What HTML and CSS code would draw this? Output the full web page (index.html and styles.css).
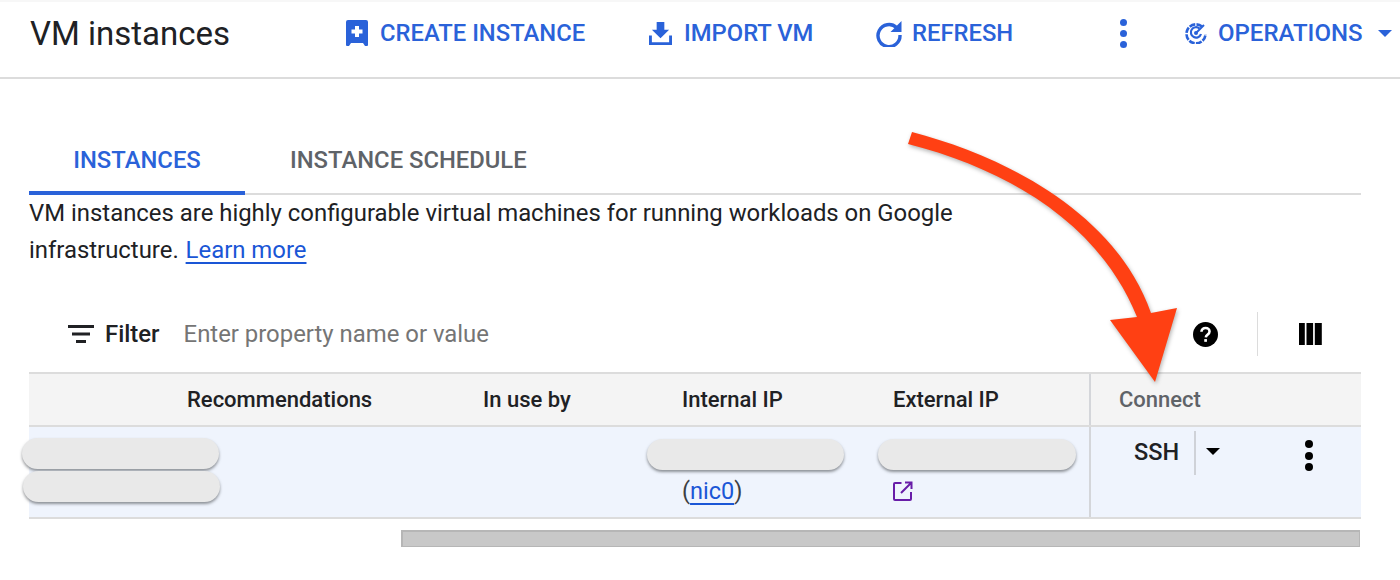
FILE: index.html
```html
<!DOCTYPE html>
<html lang="en">
<head>
<meta charset="utf-8">
<title>VM instances</title>
<link rel="stylesheet" href="styles.css">
</head>
<body>
<header class="topbar">
  <h1 class="title">VM instances</h1>
  <nav class="actions">
    <a class="action act-create">
      <svg class="ico ico-create" viewBox="0 0 22 26"><path fill="#2a62d9" d="M2 0h18a2 2 0 0 1 2 2v23a1 1 0 0 1-1 1h-2l-2-3H5l-2 3H1a1 1 0 0 1-1-1V2a2 2 0 0 1 2-2z"/><path fill="#fff" d="M9 6h4v3.500h3.500v4H13V17H9v-3.500H5.500v-4H9z"/></svg>
      CREATE INSTANCE</a>
    <a class="action act-import">
      <svg class="ico ico-import" viewBox="0 0 24 24"><path fill="#2a62d9" d="M8 0h8v8h5l-9 9-9-9h5z"/><path fill="#2a62d9" d="M0 14h3v7h18v-7h3v10H0z"/></svg>
      IMPORT VM</a>
    <a class="action act-refresh">
      <svg class="ico ico-refresh" viewBox="0 0 26 27"><path fill="none" stroke="#2a62d9" stroke-width="3.400" d="M20.500 7.500A11 11 0 1 0 24 15"/><path fill="#2a62d9" d="M25.500 1v11h-11z"/></svg>
      REFRESH</a>
    <a class="kebab"><i></i><i></i><i></i></a>
    <a class="action act-ops">
      <svg class="ico ico-ops" viewBox="0 0 22 22"><g fill="none" stroke="#2a62d9"><path stroke-width="2.600" d="M17 4.500A9.500 9.500 0 1 0 20.500 12" stroke-dasharray="6 1.200"/><path stroke-width="2.200" d="M14.500 6.500A5.200 5.200 0 1 0 16 12"/></g><circle cx="11" cy="11" r="2" fill="#2a62d9"/><path stroke="#2a62d9" stroke-width="2" d="M11 11 19 3"/></svg>
      <span class="ops-label">OPERATIONS</span>
      <span class="caret caret-blue"></span></a>
  </nav>
</header>

<main class="content">
  <div class="tabs">
    <div class="tab tab-on">INSTANCES</div>
    <div class="tab">INSTANCE SCHEDULE</div>
  </div>
  <p class="intro">VM instances are highly configurable virtual machines for running workloads on Google infrastructure. <a class="link learn">Learn more</a></p>

  <div class="filter">
    <svg class="filter-ico" viewBox="0 0 26 18"><path fill="#202124" d="M0 0h26v3H0zM4 7.500h18v3H4zM8 15h10v3H8z"/></svg>
    <span class="filter-label">Filter</span>
    <span class="filter-hint">Enter property name or value</span>
    <svg class="help" viewBox="0 0 26 26"><circle cx="13" cy="13" r="13" fill="#000"/><path fill="none" stroke="#fff" stroke-width="2.700" d="M8.800 10.200c0-2.500 2-4 4.300-4s4.100 1.500 4.100 3.700c0 3-3.500 3-3.900 6.100"/><rect x="11.700" y="17.800" width="2.800" height="2.800" fill="#fff"/></svg>
    <span class="filter-sep"></span>
    <svg class="cols" viewBox="0 0 23 22"><path fill="#000" d="M0 0h5.800v22H0zM7.500 0h6.600v22H7.500zM15.800 0h7v22h-7z"/></svg>
  </div>

  <div class="table">
    <div class="grid head">
      <div></div>
      <div>Recommendations</div>
      <div>In use by</div>
      <div>Internal IP</div>
      <div>External IP</div>
      <div class="connect-head">Connect</div>
    </div>
    <div class="grid row">
      <div></div>
      <div></div>
      <div></div>
      <div class="nic">(<a class="link">nic0</a>)</div>
      <div class="ext"><svg viewBox="0 0 20 20"><path fill="none" stroke="#681da8" stroke-width="2" d="M8.500 2H2a1 1 0 0 0-1 1v15a1 1 0 0 0 1 1h15a1 1 0 0 0 1-1v-7M12 1.500h6.500V8M18 2 8 12"/></svg></div>
      <div class="connect">
        <span class="ssh">SSH</span>
        <span class="ssh-sep"></span>
        <span class="caret caret-black"></span>
        <span class="kebab kebab-black"><i></i><i></i><i></i></span>
      </div>
      <span class="pill pill-a"></span>
      <span class="pill pill-b"></span>
      <span class="pill pill-c"></span>
      <span class="pill pill-d"></span>
    </div>
  </div>
  <div class="scroll"><div class="thumb"></div></div>
</main>

<svg class="arrow" viewBox="0 0 1400 580" aria-hidden="true"><path fill="#ff4013" d="M912 132C1000 155 1115 210 1151 313L1177 308L1155 382L1110 320L1137 317C1100 225 1010 170 908 144Z"/></svg>
</body>
</html>
```

FILE: styles.css
```css
* { box-sizing: border-box; }
html, body { margin: 0; padding: 0; }
body {
  width: 1400px;
  height: 580px;
  overflow: hidden;
  background: #fff;
  font-family: Roboto, "Liberation Sans", sans-serif;
  color: #202124;
  position: relative;
}
.topbar {
  height: 79px;
  display: flex;
  align-items: flex-start;
  padding: 0 0 0 30px;
  border-bottom: 2px solid #dcdcdc;
  border-top: 2px solid #f7f7f7;
}
.title {
  margin: 12px 0 0;
  font-size: 33px;
  line-height: 40px;
  font-weight: 400;
  width: 316px;
  color: #202124;
}
.actions { display: flex; align-items: flex-start; }
.action {
  display: flex;
  align-items: center;
  height: 28px;
  margin-top: 17px;
  color: #2a62d9;
  font-size: 23.800px;
  font-weight: 500;
  white-space: nowrap;
}
.ops-label { font-size: 24px; }
.ico { flex: none; display: block; }
.ico-create { width: 22px; height: 26px; margin-right: 12px; }
.ico-import { width: 23px; height: 23px; margin-right: 12px; }
.ico-refresh { width: 26px; height: 27px; margin-right: 10px; }
.ico-ops { width: 22px; height: 22px; margin-right: 11px; }
.act-create { width: 303px; }
.act-import { width: 227px; }
.act-refresh { width: 244px; }
.act-ops { margin-left: 58px; }
.kebab {
  display: flex;
  flex-direction: column;
  gap: 4px;
  margin-top: 17px;
}
.kebab i {
  display: block;
  width: 7px;
  height: 7px;
  border-radius: 50%;
  background: #2a62d9;
}
.caret {
  display: block;
  width: 0;
  height: 0;
  border-style: solid;
  border-width: 7px 7px 0;
}
.caret-blue { border-color: #2a62d9 transparent transparent; margin-left: 16px; }
.caret-black { border-color: #000 transparent transparent; }
.content {
  padding: 0 39px 0 29px;
}
.tabs {
  margin-top: 49px;
  height: 67px;
  display: flex;
  border-bottom: 2px solid #dcdcdc;
}
.tab {
  height: 67px;
  display: flex;
  align-items: center;
  justify-content: center;
  font-size: 23.800px;
  font-weight: 500;
  color: #5f6368;
  padding-bottom: 3px;
}
.tab-on {
  width: 216px;
  color: #2a62d9;
  border-bottom: 4px solid #2a62d9;
  padding-bottom: 0;
}
.tab:not(.tab-on) { margin-left: 45px; }
.intro {
  margin: 0;
  width: 960px;
  font-size: 23.900px;
  line-height: 37px;
  color: #202124;
}
.link {
  color: #1a56d6;
  text-decoration: underline;
  text-decoration-thickness: 2px;
  text-underline-offset: 4px;
}
.learn { margin-left: 1px; }
.filter {
  margin-top: 27px;
  height: 76px;
  display: flex;
  align-items: center;
  padding-left: 39px;
}
.filter-ico { width: 26px; height: 18px; }
.filter-label {
  margin-left: 11px;
  font-size: 23.900px;
  font-weight: 500;
  color: #202124;
}
.filter-hint {
  margin-left: 24px;
  font-size: 23.900px;
  color: #757575;
  flex: 1;
}
.help { width: 25px; height: 25px; margin-right: 39px; }
.filter-sep { width: 1px; height: 44px; background: #dcdcdc; margin-right: 41px; }
.cols { width: 23px; height: 22px; margin-right: 39px; }
.table { border-top: 2px solid #dcdcdc; }
.grid {
  display: grid;
  grid-template-columns: 158px 296px 199px 211px 196px 1fr;
}
.head {
  height: 51px;
  background: #f4f4f4;
  align-items: center;
  font-size: 22px;
  font-weight: 500;
  color: #202124;
}
.connect-head {
  height: 100%;
  display: flex;
  align-items: center;
  padding-left: 28px;
  border-left: 2px solid #d4d6da;
  color: #5f6368;
}
.row {
  position: relative;
  height: 94px;
  background: #eff4fd;
  border-top: 2px solid #dcdcdc;
  border-bottom: 2px solid #dcdcdc;
}
.nic {
  margin-top: 47px;
  font-size: 23.500px;
  line-height: 34px;
  color: #3c4043;
}
.ext { margin-top: 54px; height: 20px; }
.ext svg { width: 20px; height: 20px; display: block; }
.connect {
  display: flex;
  align-items: flex-start;
  border-left: 2px solid #d4d6da;
  padding-left: 43px;
}
.ssh {
  font-size: 23.500px;
  font-weight: 500;
  color: #202124;
  margin-top: 9px;
  line-height: 32px;
}
.ssh-sep { width: 2px; height: 44px; background: #cfd2d8; margin: 4px 0 0 15px; }
.connect .caret { margin: 21px 0 0 10px; }
.kebab-black { margin: 13px 0 0 85px; gap: 3.500px; }
.kebab-black i { background: #000; width: 8px; height: 8px; }
.pill {
  position: absolute;
  width: 197px;
  height: 31px;
  border-radius: 16px;
  background: #e9e9e9;
  box-shadow: 0 2px 3px rgba(60, 64, 67, .55);
}
.pill-a { left: -7px; top: 11px; }
.pill-b { left: -6px; top: 44px; }
.pill-c { left: 618px; top: 12px; }
.pill-d { left: 849px; top: 12px; width: 198px; }
.scroll { margin-top: 11px; padding-left: 372px; padding-right: 1px; }
.thumb {
  height: 17px;
  background: #c8c8c8;
  border: 1px solid #b6b6b6;
  border-width: 2px 1px 1px 2px;
}
.arrow {
  position: absolute;
  left: 0;
  top: 0;
  width: 1400px;
  height: 580px;
  pointer-events: none;
  filter: drop-shadow(1px 2px 2px rgba(0, 0, 0, .3));
}
```
